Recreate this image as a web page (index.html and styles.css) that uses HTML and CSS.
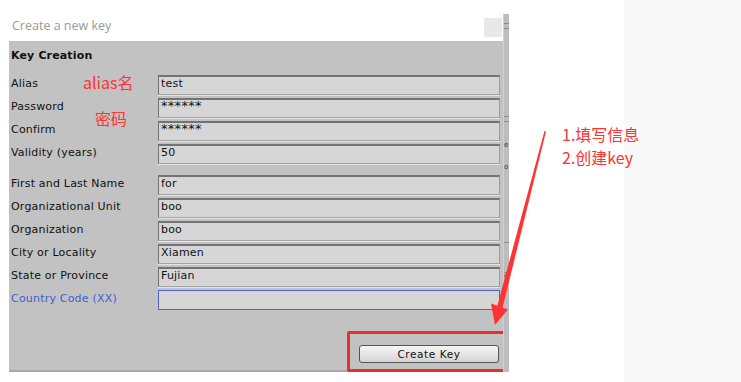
FILE: index.html
```html
<!DOCTYPE html>
<html>
<head>
<meta charset="utf-8">
<link rel="stylesheet" href="styles.css">
</head>
<body>
<div class="page">
  <main class="main">
    <div class="window">
      <div class="titlebar">
        <span class="title">Create a new key</span>
        <span class="close"></span>
      </div>
      <div class="body">
        <div class="panel">
          <div class="heading">Key Creation</div>
          <div class="form">
            <label class="lbl">Alias</label><div class="field">test</div>
            <label class="lbl">Password</label><div class="field stars">******</div>
            <label class="lbl">Confirm</label><div class="field stars">******</div>
            <label class="lbl">Validity (years)</label><div class="field">50</div>
            <div class="spacer"></div>
            <label class="lbl">First and Last Name</label><div class="field">for</div>
            <label class="lbl">Organizational Unit</label><div class="field">boo</div>
            <label class="lbl">Organization</label><div class="field">boo</div>
            <label class="lbl">City or Locality</label><div class="field">Xiamen</div>
            <label class="lbl">State or Province</label><div class="field">Fujian</div>
            <label class="lbl focus">Country Code (XX)</label><div class="field focused"></div>
          </div>
          <div class="actions">
            <div class="highlight"><button class="btn">Create Key</button></div>
          </div>
          <span class="note note-alias">alias名</span>
          <span class="note note-pwd">密码</span>
        </div>
        <div class="strip">
          <span class="tick t1"></span><span class="tick t2"></span><span class="tick t3"></span><span class="tick t4"></span><span class="tick t5"></span><span class="tick t6"></span>
          <span class="peek p1">e</span><span class="peek p2">o</span><span class="peek p3">g</span>
        </div>
      </div>
    </div>
    <div class="steps">
      <div>1.填写信息</div>
      <div>2.创建key</div>
    </div>
    <svg class="arrow" width="741" height="382" viewBox="0 0 741 382">
      <polygon points="544.5,131 546,131.5 502.5,308 497,307" fill="#ff3333"/>
      <polygon points="491,303.5 508,309.5 495,325" fill="#ff3333"/>
    </svg>
  </main>
  <aside class="aside"></aside>
</div>
</body>
</html>
```

FILE: styles.css
```css
html, body {
  margin: 0;
  padding: 0;
  background: #ffffff;
}
.page {
  display: flex;
  width: 741px;
  height: 382px;
  overflow: hidden;
}
.main {
  position: relative;
  width: 624px;
  height: 382px;
  background: #ffffff;
}
.aside {
  flex: 1;
  background: #f8f8f8;
}
.window {
  margin: 14px 0 0 9px;
  width: 500px;
  display: flex;
  flex-direction: column;
}
.titlebar {
  height: 27px;
  display: flex;
  align-items: flex-start;
  justify-content: space-between;
  background: #ffffff;
  margin-right: 5px;
}
.title {
  font-family: "Open Sans", "Liberation Sans", sans-serif;
  font-size: 12.5px;
  color: #9a9a9a;
  padding: 3px 0 0 3px;
  line-height: 17px;
}
.close {
  width: 18px;
  height: 19px;
  margin: 4px 2px 0 0;
  background: #e8e8e8;
}
.body {
  display: flex;
  height: 331px;
}
.panel {
  position: relative;
  width: 495px;
  background: #c2c2c2;
  border-bottom: 2px solid #a9a9a9;
  box-sizing: border-box;
  font-family: "DejaVu Sans", Verdana, sans-serif;
  font-size: 11px;
  color: #111111;
}
.strip {
  position: relative;
  width: 5px;
  margin-top: -27px;
  height: 358px;
  background: #bdbdbd;
  border-left: 1px solid #d0d0d0;
}
.tick {
  position: absolute;
  left: 0;
  width: 5px;
  height: 1px;
  background: #8a8a8a;
}
.t1 { top: 9px; }
.t2 { top: 14px; }
.t3 { top: 102px; }
.t4 { top: 107px; }
.t5 { top: 228px; }
.t6 { top: 258px; }
.peek {
  position: absolute;
  left: 0;
  font-family: "DejaVu Sans", sans-serif;
  font-size: 7px;
  line-height: 8px;
  color: #333;
}
.p1 { top: 127px; }
.p2 { top: 149px; }
.p3 { top: 258px; }
.heading {
  font-weight: bold;
  padding: 8px 0 0 2px;
  line-height: 14px;
  height: 27px;
  box-sizing: border-box;
  letter-spacing: 0.15px;
}
.form {
  display: grid;
  grid-template-columns: 149px 342px;
  grid-template-rows: repeat(4, 20px) 5px repeat(6, 20px);
  row-gap: 3px;
  margin-top: 7px;
}
.lbl {
  padding: 1px 0 0 2px;
  line-height: 16px;
  letter-spacing: 0.2px;
}
.lbl.focus {
  color: #3f5ed0;
}
.spacer {
  grid-column: 1 / 3;
}
.field {
  box-sizing: border-box;
  height: 20px;
  background: #d6d6d6;
  border-top: 2px solid #737373;
  border-left: 1px solid #737373;
  border-right: 1px solid #9c9c9c;
  border-bottom: 1px solid #a4a4a4;
  box-shadow: 0 1px 0 #e4e4e4;
  padding: 0 0 0 2px;
  line-height: 14px;
  letter-spacing: 0.2px;
}
.field.stars {
  font-size: 13px;
  line-height: 12px;
  letter-spacing: 0.3px;
}
.field.focused {
  border: 1px solid #4a63d6;
  box-shadow: none;
}
.actions {
  display: flex;
  justify-content: flex-end;
  margin-top: 21px;
}
.highlight {
  width: 159px;
  height: 41px;
  box-sizing: border-box;
  border: 3px solid #e53030;
  border-radius: 2px;
  margin-right: -3px;
  display: flex;
  align-items: flex-end;
  justify-content: flex-start;
  padding: 0 0 6px 9px;
}
.btn {
  width: 140px;
  height: 18px;
  box-sizing: border-box;
  border: 1px solid #555;
  border-radius: 3px;
  background: linear-gradient(#f6f6f6, #d4d4d4);
  font-family: "DejaVu Sans", Verdana, sans-serif;
  font-size: 10.5px;
  color: #111;
  padding: 0;
  line-height: 15px;
  letter-spacing: 0.6px;
}
.note {
  position: absolute;
  font-family: "Noto Sans CJK SC", "Noto Sans", sans-serif;
  font-size: 16px;
  color: #ff3333;
  line-height: 18px;
}
.note-alias { left: 74px; top: 32px; }
.note-pwd { left: 86px; top: 68px; }
.steps {
  position: absolute;
  left: 562px;
  top: 123px;
  font-family: "Noto Sans CJK SC", "Noto Sans", sans-serif;
  font-size: 16px;
  line-height: 23px;
  color: #ff3333;
  white-space: nowrap;
}
.arrow {
  position: absolute;
  left: 0;
  top: 0;
  pointer-events: none;
}
```
